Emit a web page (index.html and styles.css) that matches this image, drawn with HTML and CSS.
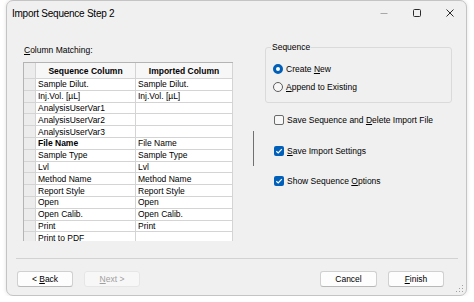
FILE: index.html
```html
<!DOCTYPE html>
<html lang="en">
<head>
    <meta charset="UTF-8">
    <meta name="viewport" content="width=device-width, initial-scale=1.0">
    <title>Import Sequence Step 2</title>
    <link rel="stylesheet" href="styles.css">
</head>
<body>
    <div class="window">
        <div class="titlebar">
            <span class="title">Import Sequence Step 2</span>
            <div class="caption-btns">
                <span class="cap">
                    <svg width="8" height="8" viewBox="0 0 8 8"><line x1="0.5" y1="4.5" x2="7.5" y2="4.5" stroke="#a8a8a8" stroke-width="1"/></svg>
                </span>
                <span class="cap">
                    <svg width="8" height="8" viewBox="0 0 8 8"><rect x="0.5" y="0.5" width="7" height="7" rx="1" fill="none" stroke="#2b2b2b" stroke-width="1"/></svg>
                </span>
                <span class="cap">
                    <svg width="8" height="8" viewBox="0 0 8 8"><path d="M0.5 0.5 L7.5 7.5 M7.5 0.5 L0.5 7.5" stroke="#2b2b2b" stroke-width="1"/></svg>
                </span>
            </div>
        </div>

        <div class="main">
            <div class="left">
                <div class="label"><u>C</u>olumn Matching:</div>
                <div class="grid-wrap">
                    <table class="grid">
                        <colgroup>
                            <col class="c-rh">
                            <col class="c-seq">
                            <col class="c-imp">
                        </colgroup>
                        <thead>
                            <tr>
                                <th></th>
                                <th>Sequence Column</th>
                                <th>Imported Column</th>
                            </tr>
                        </thead>
                        <tbody>
                            <tr><td></td><td>Sample Dilut.</td><td>Sample Dilut.</td></tr>
                            <tr><td></td><td>Inj.Vol. [µL]</td><td>Inj.Vol. [µL]</td></tr>
                            <tr><td></td><td>AnalysisUserVar1</td><td></td></tr>
                            <tr><td></td><td>AnalysisUserVar2</td><td></td></tr>
                            <tr><td></td><td>AnalysisUserVar3</td><td></td></tr>
                            <tr><td></td><td class="req">File Name</td><td>File Name</td></tr>
                            <tr><td></td><td>Sample Type</td><td>Sample Type</td></tr>
                            <tr><td></td><td>Lvl</td><td>Lvl</td></tr>
                            <tr><td></td><td>Method Name</td><td>Method Name</td></tr>
                            <tr><td></td><td>Report Style</td><td>Report Style</td></tr>
                            <tr><td></td><td>Open</td><td>Open</td></tr>
                            <tr><td></td><td>Open Calib.</td><td>Open Calib.</td></tr>
                            <tr><td></td><td>Print</td><td>Print</td></tr>
                            <tr><td></td><td>Print to PDF</td><td></td></tr>
                        </tbody>
                    </table>
                </div>
            </div>

            <div class="right">
                <span class="splitter"></span>
                <fieldset class="group">
                    <legend>Sequence</legend>
                    <label class="opt"><span class="radio on"></span><span>Create <u>N</u>ew</span></label>
                    <label class="opt"><span class="radio"></span><span><u>A</u>ppend to Existing</span></label>
                </fieldset>
                <div class="checks">
                    <label class="check"><span class="box"></span><span>Save Sequence and <u>D</u>elete Import File</span></label>
                    <label class="check"><span class="box on"><svg width="10" height="10" viewBox="0 0 10 10"><path d="M2.3 5.2 L4.2 7 L7.8 3.2" fill="none" stroke="#fff" stroke-width="1.2"/></svg></span><span><u>S</u>ave Import Settings</span></label>
                    <label class="check"><span class="box on"><svg width="10" height="10" viewBox="0 0 10 10"><path d="M2.3 5.2 L4.2 7 L7.8 3.2" fill="none" stroke="#fff" stroke-width="1.2"/></svg></span><span>Show Sequence <u>O</u>ptions</span></label>
                </div>
            </div>
        </div>

        <div class="footer">
            <div class="btn-group">
                <button class="btn">&lt; <u>B</u>ack</button>
                <button class="btn" disabled><u>N</u>ext &gt;</button>
            </div>
            <div class="btn-group">
                <button class="btn">Cancel</button>
                <button class="btn"><u>F</u>inish</button>
            </div>
        </div>

        <svg class="grip" width="8" height="8" viewBox="0 0 8 8">
            <rect x="6" y="0" width="1" height="1" fill="#a0a0a0"/>
            <rect x="3" y="3" width="1" height="1" fill="#a0a0a0"/>
            <rect x="6" y="3" width="1" height="1" fill="#a0a0a0"/>
            <rect x="0" y="6" width="1" height="1" fill="#a0a0a0"/>
            <rect x="3" y="6" width="1" height="1" fill="#a0a0a0"/>
            <rect x="6" y="6" width="1" height="1" fill="#a0a0a0"/>
        </svg>
    </div>
</body>
</html>
```

FILE: styles.css
```css
body {
    margin: 0;
    padding: 0;
    background-color: #ffffff;
    font-family: "Segoe UI", "Liberation Sans", Arial, sans-serif;
    font-size: 8.5px;
    color: #000000;
}

.window {
    position: relative;
    box-sizing: border-box;
    width: 461px;
    height: 296px;
    margin-left: 6px;
    background-color: #f0f0f0;
    border: 1px solid #c4c4c4;
    border-radius: 7px;
    box-shadow: 0 0 4px rgba(0, 0, 0, 0.12);
    display: flex;
    flex-direction: column;
    overflow: hidden;
}

/* title bar */
.titlebar {
    height: 24px;
    display: flex;
    align-items: center;
    justify-content: space-between;
    flex-shrink: 0;
}
.title {
    padding-left: 5px;
    font-size: 10px;
    letter-spacing: -0.25px;
}
.caption-btns {
    display: flex;
    height: 100%;
}
.cap {
    width: 33px;
    display: flex;
    align-items: center;
    justify-content: center;
}

/* main area */
.main {
    height: 233px;
    display: flex;
    flex-shrink: 0;
}
.left {
    padding-left: 16px;
    width: 210px;
}
.label {
    padding-top: 19px;
    padding-left: 1px;
    line-height: 12px;
}
.grid-wrap {
    margin-top: 6px;
    width: 210px;
    height: 179px;
    box-sizing: border-box;
    border-left: 1px solid #b4b4b4;
    border-top: 1px solid #b4b4b4;
    background-color: #ffffff;
    overflow: hidden;
}
.grid {
    border-collapse: separate;
    border-spacing: 0;
    table-layout: fixed;
    width: 209px;
}
.c-rh { width: 12px; }
.c-seq { width: 100px; }
.c-imp { width: 97px; }
.grid th, .grid td {
    padding: 0 2px;
    border-right: 1px solid #d4d4d4;
    border-bottom: 1px solid #d4d4d4;
    text-align: left;
    white-space: nowrap;
    overflow: hidden;
    line-height: 10px;
    font-weight: normal;
}
.grid thead tr {
    height: 16px;
}
.grid th {
    background-color: #f7f7f7;
    font-weight: bold;
    text-align: center;
}
.grid tbody tr {
    height: 11.8px;
}
.grid th:first-child, .grid td:first-child {
    background-color: #ececec;
}
.grid .req {
    font-weight: bold;
}

.right {
    position: relative;
    padding-left: 32px;
    flex: 1;
}
.splitter {
    position: absolute;
    left: 20px;
    top: 106px;
    width: 1px;
    height: 35px;
    background-color: #707070;
}
.group {
    margin: 16px 0 0 0;
    width: 187px;
    box-sizing: border-box;
    padding: 7px 0 6px 7px;
    border: 1px solid #dadada;
    border-radius: 3px;
}
.group legend {
    margin-left: -2px;
    padding: 0 1px;
    line-height: 12px;
}
.opt, .check {
    display: flex;
    align-items: center;
    gap: 3px;
    height: 18px;
}
.radio {
    width: 10px;
    height: 10px;
    box-sizing: border-box;
    border-radius: 50%;
    border: 1px solid #5c5c5c;
    background-color: #f7f7f7;
}
.radio.on {
    border: 3px solid #005fb8;
    background-color: #ffffff;
}

.checks {
    padding-left: 9px;
    padding-top: 2px;
}
.check {
    height: 30.5px;
}
.box {
    width: 10px;
    height: 10px;
    box-sizing: border-box;
    border-radius: 2px;
    border: 1px solid #6a6a6a;
    background-color: #f7f7f7;
    display: flex;
}
.box.on {
    border: none;
    background-color: #005fb8;
}

/* footer */
.footer {
    margin: 0 8px 0 9px;
    border-top: 1px solid #d2d2d2;
    padding: 12px 14px 0 1px;
    display: flex;
    justify-content: space-between;
}
.btn-group {
    display: flex;
    gap: 11px;
}
.btn {
    width: 56px;
    height: 16px;
    padding: 0;
    font-family: inherit;
    font-size: 8.5px;
    color: #000000;
    background-color: #fdfdfd;
    border: 1px solid #d0d0d0;
    border-bottom-color: #b8b8b8;
    border-radius: 3px;
}
.btn:disabled {
    color: #a0a0a0;
    background-color: #f7f7f7;
    border-color: #e6e6e6;
}
.btn-group:last-child .btn:first-child {
    width: 57px;
}

.grip {
    position: absolute;
    right: 2px;
    bottom: 2px;
}
```
